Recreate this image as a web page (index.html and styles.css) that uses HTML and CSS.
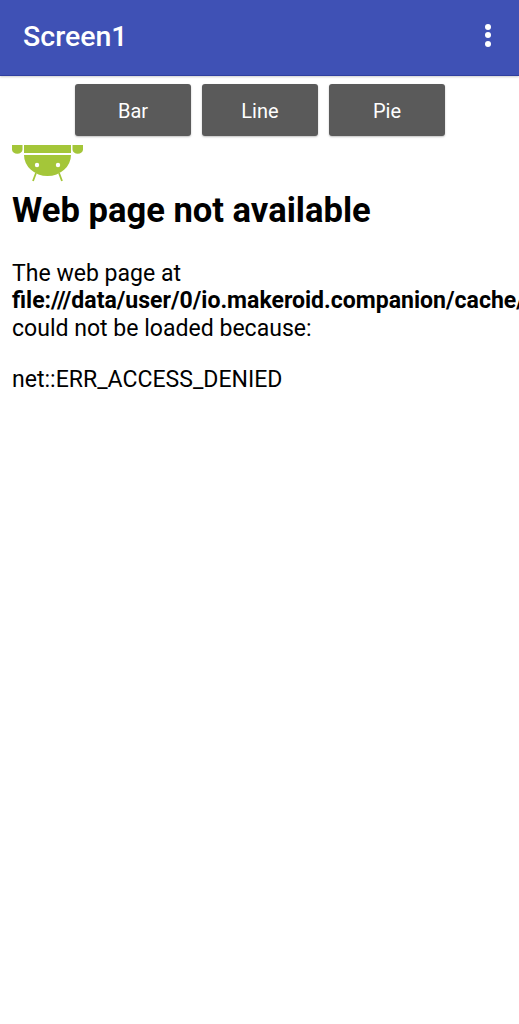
FILE: index.html
```html
<!DOCTYPE html>
<html lang="en">
<head>
<meta charset="utf-8">
<title>Screen1</title>
<link rel="stylesheet" href="styles.css">
</head>
<body>
<header class="appbar">
  <span class="title">Screen1</span>
  <span class="overflow"><i></i><i></i><i></i></span>
</header>
<nav class="buttons">
  <button class="btn">Bar</button>
  <button class="btn">Line</button>
  <button class="btn">Pie</button>
</nav>
<main class="web">
  <svg class="droid" width="72" height="37" viewBox="0 0 72 37">
    <path fill="#a4c639" d="M0 0h10.500v4.500a5.250 4.250 0 0 1-10.500 0zM60.500 0h10.500v4.500a5.250 4.250 0 0 1-10.500 0zM12 0h47v8H12zM12 10h47a23.500 21 0 0 1-47 0z"/>
    <circle cx="25" cy="20" r="2.200" fill="#fff"/>
    <circle cx="46" cy="20" r="2.200" fill="#fff"/>
    <path stroke="#a4c639" stroke-width="1.800" fill="none" d="M24 28l-3 8M47 28l3 8"/>
  </svg>
  <h1 class="heading">Web page not available</h1>
  <p class="msg">The web page at<br><b>file:///data/user/0/io.makeroid.companion/cache/chart.html</b><br>could not be loaded because:</p>
  <p class="msg err">net::ERR_ACCESS_DENIED</p>
</main>
</body>
</html>
```
FILE: styles.css
```css
html, body {
  margin: 0;
  padding: 0;
  background: #fff;
  width: 519px;
  height: 1024px;
  overflow: hidden;
  font-family: Roboto, "Liberation Sans", sans-serif;
}
.appbar {
  height: 76px;
  box-sizing: border-box;
  background: #3f51b5;
  border-bottom: 1px solid #303f9f;
  box-shadow: 0 1px 2px rgba(0,0,0,.2);
  display: flex;
  align-items: center;
  justify-content: space-between;
  padding: 0 28px 3px 23px;
}
.title {
  color: #fff;
  font-size: 28.500px;
  font-weight: 500;
}
.overflow {
  display: flex;
  flex-direction: column;
  gap: 2.500px;
  margin-bottom: 2px;
}
.overflow i {
  display: block;
  width: 6px;
  height: 6px;
  border-radius: 50%;
  background: #fff;
}
.buttons {
  display: flex;
  justify-content: center;
  gap: 11.500px;
  padding: 8px 0 0 1px;
}
.btn {
  width: 115.500px;
  height: 52px;
  border: 0;
  border-radius: 3px;
  background: #5a5a5a;
  box-shadow: 0 1px 2px rgba(0,0,0,.25);
  color: #fff;
  font-family: inherit;
  font-size: 20px;
  padding: 2px 0 0;
}
.web {
  padding: 9px 0 0 12px;
  white-space: nowrap;
  color: #000;
}
.droid {
  display: block;
}
.heading {
  margin: 6px 0 0;
  font-size: 34.600px;
  line-height: 44px;
  font-weight: 700;
}
.msg {
  margin: 28px 0 0;
  font-size: 23.050px;
  line-height: 27.300px;
}
.err {
  margin-top: 24px;
}
```
